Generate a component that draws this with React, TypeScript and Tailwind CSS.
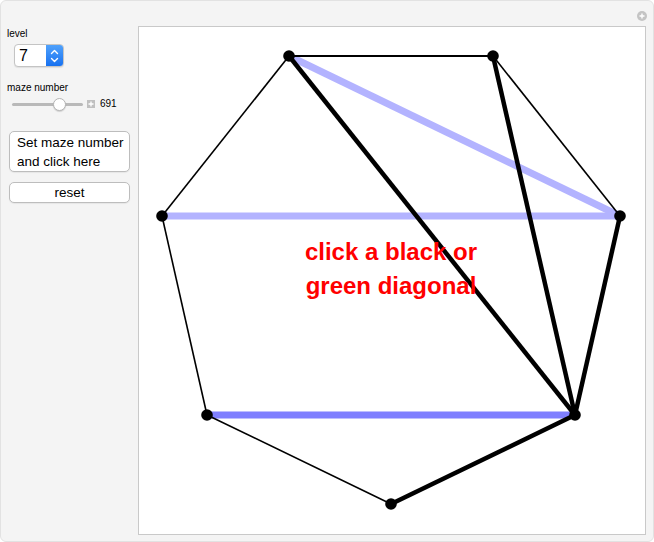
import React from "react";

const font = { fontFamily: '"Liberation Sans", Arial, sans-serif' };

type P = [number, number];

const V: Record<string, P> = {
  A: [289, 55],
  B: [493, 55],
  C: [620, 215],
  D: [575, 414],
  E: [391, 503],
  F: [207, 414],
  G: [162, 215],
};

const segments: { a: string; b: string; color: string; w: number }[] = [
  { a: "A", b: "C", color: "#b3b3ff", w: 7 },
  { a: "G", b: "C", color: "#b3b3ff", w: 7 },
  { a: "F", b: "D", color: "#7f7fff", w: 7 },
  { a: "A", b: "B", color: "#000", w: 2 },
  { a: "B", b: "C", color: "#000", w: 1.6 },
  { a: "E", b: "F", color: "#000", w: 1.6 },
  { a: "F", b: "G", color: "#000", w: 1.6 },
  { a: "G", b: "A", color: "#000", w: 1.6 },
  { a: "C", b: "D", color: "#000", w: 4.5 },
  { a: "D", b: "E", color: "#000", w: 4.5 },
  { a: "A", b: "D", color: "#000", w: 4.5 },
  { a: "B", b: "D", color: "#000", w: 4.5 },
];

function Spinner() {
  return (
    <div className="ml-[13px] mt-[3px] flex h-[23px] w-[50px] overflow-hidden rounded-[4px] border border-[#c4c4c4] bg-white shadow-[0_1px_1px_rgba(0,0,0,0.08)]">
      <div className="flex flex-1 items-center pl-[4px] text-[16px] text-black">7</div>
      <div className="flex w-[17px] flex-col items-center justify-center bg-gradient-to-b from-[#4fa1fb] to-[#1671f0]">
        <svg width="9" height="16" viewBox="0 0 9 16" fill="none" stroke="white" strokeWidth="1.4" strokeLinecap="round" strokeLinejoin="round">
          <path d="M1.5 5.5 L4.5 2.5 L7.5 5.5" />
          <path d="M1.5 10.5 L4.5 13.5 L7.5 10.5" />
        </svg>
      </div>
    </div>
  );
}

function Slider() {
  return (
    <div className="mt-[1px] flex items-center pl-[11px]">
      <div className="relative h-[12px] w-[71px]">
        <div className="absolute left-0 right-0 top-[5px] h-[3px] rounded-full bg-[#b9b9b9]" />
        <div className="absolute left-[41px] top-0 h-[13px] w-[13px] rounded-full border border-[#b5b5b5] bg-white shadow-[0_1px_1px_rgba(0,0,0,0.15)]" />
      </div>
      <div className="ml-[4px] flex h-[8px] w-[8px] items-center justify-center bg-[#c0c0c0]">
        <svg width="6" height="6" viewBox="0 0 6 6" stroke="white" strokeWidth="1.3">
          <path d="M3 0.5 V5.5 M0.5 3 H5.5" />
        </svg>
      </div>
      <span className="ml-[5px] text-[10px] text-black">691</span>
    </div>
  );
}

function Plot() {
  return (
    <div className="mt-[25px] h-[509px] w-[508px] border border-[#c9c9c9] bg-white">
      <svg width="506" height="507" viewBox="139 26 506 507">
        {segments.map((s, i) => (
          <line
            key={i}
            x1={V[s.a][0]}
            y1={V[s.a][1]}
            x2={V[s.b][0]}
            y2={V[s.b][1]}
            stroke={s.color}
            strokeWidth={s.w}
            strokeLinecap="butt"
          />
        ))}
        {Object.values(V).map(([x, y], i) => (
          <circle key={i} cx={x} cy={y} r={5.8} fill="#000" />
        ))}
        <text x={391} y={259} textAnchor="middle" fill="#ff0000" fontWeight="bold" fontSize="24" style={font}>
          click a black or
        </text>
        <text x={391} y={293} textAnchor="middle" fill="#ff0000" fontWeight="bold" fontSize="24" style={font}>
          green diagonal
        </text>
      </svg>
    </div>
  );
}

export default function App() {
  return (
    <div className="relative flex h-[542px] w-[654px] rounded-[6px] border border-[#e2e2e2] bg-[#f4f4f4]" style={font}>
      <div className="flex w-[137px] flex-col">
        <div className="mt-[25px] pl-[6px] text-[10px] text-black">level</div>
        <Spinner />
        <div className="mt-[13px] pl-[6px] text-[10px] text-black">maze number</div>
        <Slider />
        <button className="mx-[8px] mt-[20px] h-[41px] rounded-[5px] border border-[#bdbdbd] bg-white pl-[7px] text-left text-[13.5px] leading-[19px] text-black shadow-[0_1px_1px_rgba(0,0,0,0.06)]">
          Set maze number
          <br />
          and click here
        </button>
        <button className="mx-[8px] mt-[10px] h-[21px] rounded-[5px] border border-[#bdbdbd] bg-white text-[13.5px] leading-[19px] text-black shadow-[0_1px_1px_rgba(0,0,0,0.06)]">
          reset
        </button>
      </div>
      <Plot />
      <div className="absolute right-[6px] top-[10px] flex h-[10px] w-[10px] items-center justify-center rounded-full bg-[#c4c4c4]">
        <svg width="6" height="6" viewBox="0 0 6 6" stroke="white" strokeWidth="1.4">
          <path d="M3 0.5 V5.5 M0.5 3 H5.5" />
        </svg>
      </div>
    </div>
  );
}
